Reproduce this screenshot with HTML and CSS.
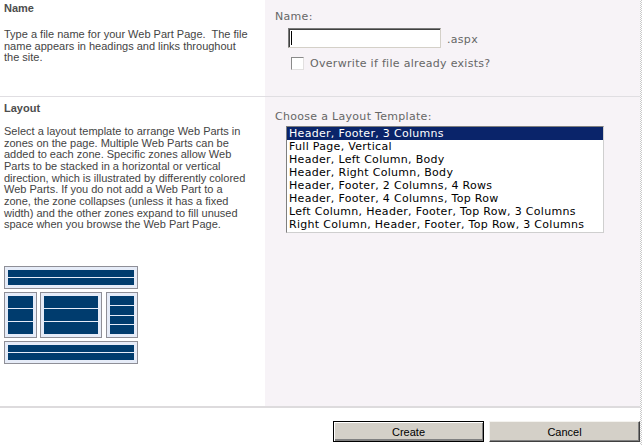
FILE: index.html
```html
<!DOCTYPE html>
<html>
<head>
<meta charset="utf-8">
<title>New Web Part Page</title>
<link rel="stylesheet" href="styles.css">
</head>
<body>
<div class="shell">
  <div class="main">
    <div class="sec sec1">
      <div class="desc">
        <div class="heading">Name</div>
        <div class="text t1">Type a file name for your Web Part Page.&nbsp; The file<br>name appears in headings and links throughout<br>the site.</div>
      </div>
      <div class="field">
        <div class="label">Name:</div>
        <div class="input-row">
          <div class="textbox"><span class="caret"></span></div>
          <span class="ext">.aspx</span>
        </div>
        <div class="check-row">
          <span class="checkbox"></span>
          <span class="check-label">Overwrite if file already exists?</span>
        </div>
      </div>
    </div>
    <div class="sec sec2">
      <div class="desc">
        <div class="heading">Layout</div>
        <div class="text t2">Select a layout template to arrange Web Parts in<br>zones on the page. Multiple Web Parts can be<br>added to each zone. Specific zones allow Web<br>Parts to be stacked in a horizontal or vertical<br>direction, which is illustrated by differently colored<br>Web Parts. If you do not add a Web Part to a<br>zone, the zone collapses (unless it has a fixed<br>width) and the other zones expand to fill unused<br>space when you browse the Web Part Page.</div>
        <div class="preview">
          <div class="zone wide"><div class="bar"></div><div class="bar"></div></div>
          <div class="zrow">
            <div class="zone side-l"><div class="bar"></div><div class="bar"></div><div class="bar"></div></div>
            <div class="zone center"><div class="bar"></div><div class="bar"></div><div class="bar"></div></div>
            <div class="zone side-r"><div class="bar"></div><div class="bar"></div><div class="bar"></div><div class="bar"></div></div>
          </div>
          <div class="zone wide"><div class="bar"></div><div class="bar"></div></div>
        </div>
      </div>
      <div class="field">
        <div class="label label2">Choose a Layout Template:</div>
        <ul class="listbox">
          <li class="selected">Header, Footer, 3 Columns</li>
          <li>Full Page, Vertical</li>
          <li>Header, Left Column, Body</li>
          <li>Header, Right Column, Body</li>
          <li>Header, Footer, 2 Columns, 4 Rows</li>
          <li>Header, Footer, 4 Columns, Top Row</li>
          <li>Left Column, Header, Footer, Top Row, 3 Columns</li>
          <li>Right Column, Header, Footer, Top Row, 3 Columns</li>
        </ul>
      </div>
    </div>
    <div class="footer">
      <button class="btn btn-default">Create</button>
      <button class="btn">Cancel</button>
    </div>
  </div>
  <div class="edge"></div>
</div>
</body>
</html>
```

FILE: styles.css
```css
html, body {
  margin: 0;
  padding: 0;
  background: #ffffff;
}
body {
  width: 642px;
  height: 445px;
  overflow: hidden;
}
.shell {
  display: flex;
  height: 445px;
}
.main {
  width: 640px;
  display: flex;
  flex-direction: column;
}
.edge {
  width: 2px;
  background: repeating-conic-gradient(#c9c9c9 0 25%, #ffffff 0 50%) 0 0 / 2px 2px;
}
.sec {
  display: flex;
}
.sec1 {
  height: 96px;
  border-bottom: 1px solid #e0dee2;
}
.sec2 {
  height: 309px;
  border-bottom: 2px solid #dddbdd;
}
.desc {
  width: 265px;
  box-sizing: border-box;
  padding-left: 4px;
  background: #ffffff;
  font-family: "Liberation Sans", Arial, sans-serif;
  font-size: 11px;
  color: #444444;
}
.field {
  flex: 1;
  background: #f7f3f7;
  font-family: "DejaVu Sans", Verdana, sans-serif;
  font-size: 11px;
  letter-spacing: 0.3px;
  color: #666666;
}
.heading {
  font-weight: bold;
  line-height: 14px;
  color: #4d4d4d;
}
.sec1 .heading {
  padding-top: 1px;
}
.sec2 .heading {
  padding-top: 4px;
}
.text {
  line-height: 11.67px;
  white-space: nowrap;
}
.t1 {
  margin-top: 14px;
}
.t2 {
  margin-top: 11px;
}
.label {
  line-height: 14px;
  padding-top: 10px;
  padding-left: 10px;
}
.label2 {
  padding-top: 13px;
}
.input-row {
  display: flex;
  margin-top: 4px;
  margin-left: 23px;
}
.textbox {
  width: 153px;
  height: 20px;
  box-sizing: border-box;
  background: #ffffff;
  border: 1px solid;
  border-color: #7a7a7a #d4d0c8 #d4d0c8 #7a7a7a;
  box-shadow: inset 1px 1px 0 #404040;
  position: relative;
}
.caret {
  position: absolute;
  left: 2px;
  top: 2px;
  width: 1px;
  height: 14px;
  background: #000000;
}
.ext {
  margin-left: 6px;
  line-height: 14px;
  margin-top: 5px;
}
.check-row {
  display: flex;
  align-items: center;
  margin-top: 9px;
  margin-left: 26px;
  height: 13px;
}
.checkbox {
  width: 13px;
  height: 13px;
  box-sizing: border-box;
  background: #ffffff;
  border: 1px solid;
  border-color: #8a8a8a #e2e0e0 #e2e0e0 #8a8a8a;
}
.check-label {
  margin-left: 6px;
  line-height: 14px;
}
.listbox {
  list-style: none;
  margin: 2px 0 0 21px;
  padding: 0 0 1px 0;
  width: 318px;
  box-sizing: border-box;
  background: #ffffff;
  border: 1px solid;
  border-color: #7f7f7f #cfcfcf #cfcfcf #7f7f7f;
  color: #000000;
}
.listbox li {
  height: 13px;
  line-height: 13px;
  padding-left: 2px;
  white-space: nowrap;
}
.listbox li.selected {
  background: #0a246a;
  color: #ffffff;
}
.preview {
  margin-top: 35px;
  width: 134px;
  display: flex;
  flex-direction: column;
  gap: 3px;
}
.zone {
  box-sizing: border-box;
  border: 1px solid #8f8f97;
  background: #e6ecf8;
  padding: 3px;
  display: flex;
  flex-direction: column;
  gap: 1px;
}
.zone .bar {
  flex: 1;
  background: #003c6e;
}
.wide {
  height: 23px;
}
.zrow {
  display: flex;
  height: 46px;
  gap: 3px;
}
.side-l {
  width: 33px;
}
.center {
  width: 64px;
  margin-right: 1px;
}
.side-r {
  width: 32px;
}
.footer {
  flex: 1;
  display: flex;
  justify-content: flex-end;
  align-items: flex-start;
  padding-top: 13px;
  gap: 5px;
  background: #ffffff;
}
.btn {
  width: 151px;
  height: 21px;
  box-sizing: border-box;
  margin: 0;
  padding: 0;
  background: #d4d0c8;
  font-family: "Liberation Sans", Arial, sans-serif;
  font-size: 11px;
  color: #000000;
  border: 1px solid;
  border-color: #f4f3ef #404040 #404040 #f4f3ef;
  box-shadow: inset -1px -1px 0 #808080;
}
.btn-default {
  border: 1px solid #000000;
  box-shadow: inset 1px 1px 0 #ffffff, inset -1px -2px 0 #808080;
}
```
